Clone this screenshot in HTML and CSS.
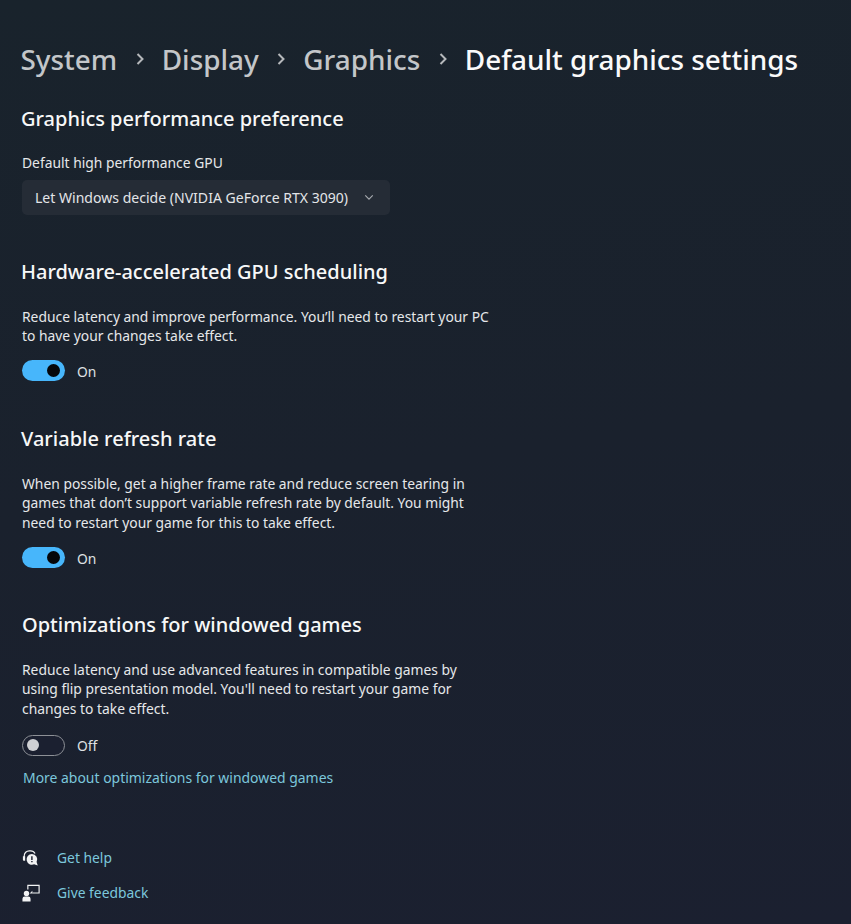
FILE: index.html
```html
<!DOCTYPE html>
<html lang="en">
<head>
<meta charset="utf-8">
<title>Default graphics settings</title>
<link rel="stylesheet" href="styles.css">
</head>
<body>
<main class="page">
  <nav class="crumbs">
    <span class="crumb">System</span>
    <svg class="sep" viewBox="0 0 10 14"><path d="M2.5 2l5 5-5 5"/></svg>
    <span class="crumb">Display</span>
    <svg class="sep" viewBox="0 0 10 14"><path d="M2.5 2l5 5-5 5"/></svg>
    <span class="crumb">Graphics</span>
    <svg class="sep" viewBox="0 0 10 14"><path d="M2.5 2l5 5-5 5"/></svg>
    <span class="crumb current">Default graphics settings</span>
  </nav>

  <section class="sec sec-gpu">
    <h2>Graphics performance preference</h2>
    <p class="label">Default high performance GPU</p>
    <div class="select">
      <span>Let Windows decide (NVIDIA GeForce RTX 3090)</span>
      <svg class="chev" viewBox="0 0 12 8"><path d="M1.5 1.5L6 6l4.5-4.5"/></svg>
    </div>
  </section>

  <section class="sec sec-hags">
    <h2>Hardware-accelerated GPU scheduling</h2>
    <p class="desc">Reduce latency and improve performance. You’ll need to restart your PC<br>to have your changes take effect.</p>
    <div class="toggle-row"><span class="toggle on"></span><span>On</span></div>
  </section>

  <section class="sec sec-vrr">
    <h2>Variable refresh rate</h2>
    <p class="desc">When possible, get a higher frame rate and reduce screen tearing in<br>games that don’t support variable refresh rate by default. You might<br>need to restart your game for this to take effect.</p>
    <div class="toggle-row"><span class="toggle on"></span><span>On</span></div>
  </section>

  <section class="sec sec-win">
    <h2>Optimizations for windowed games</h2>
    <p class="desc">Reduce latency and use advanced features in compatible games by<br>using flip presentation model. You'll need to restart your game for<br>changes to take effect.</p>
    <div class="toggle-row off-row"><span class="toggle"></span><span>Off</span></div>
    <a class="link more">More about optimizations for windowed games</a>
  </section>

  <footer class="help">
    <div class="help-row">
      <svg class="help-icon" viewBox="0 0 20 20">
        <path class="stroke" d="M2.5 10.5V7.500a5.500 5.500 0 0 1 5.500-5.500h1.500a5.500 5.500 0 0 1 5 3"/>
        <path class="fill" d="M1 8h2.500v5H2a1 1 0 0 1-1-1z"/>
        <path class="fill" fill-rule="evenodd" d="M11 5.5a6 6 0 0 1 5.2 9l1.3 3.7-4-1.2A6 6 0 1 1 11 5.500zM10.200 8v4.200h1.600V8zM10.200 13.200v1.600h1.600v-1.600z"/>
      </svg>
      <a class="link">Get help</a>
    </div>
    <div class="help-row">
      <svg class="help-icon" viewBox="0 0 20 20">
        <path class="stroke" d="M6.500 6V1.500h12.500v8.500h-7.500"/>
        <path class="fill" d="M8.500 10.500l3-3v3z"/>
        <circle class="fill" cx="5" cy="10.500" r="3"/>
        <path class="fill" d="M0.500 19.500v-3a2.500 2.500 0 0 1 2.500-2.500h4a2.500 2.500 0 0 1 2.500 2.500v3z"/>
      </svg>
      <a class="link">Give feedback</a>
    </div>
  </footer>
</main>
</body>
</html>
```

FILE: styles.css
```css
* { box-sizing: border-box; }
html, body { margin: 0; height: 100%; }
body {
  background: linear-gradient(172deg, #19232c 0%, #1a212d 50%, #1b2030 100%);
  color: #e6e8ea;
  font-family: "Noto Sans", "Open Sans", "Liberation Sans", sans-serif;
  font-size: 13.85px;
  overflow: hidden;
}
.page { padding: 39px 0 0 22px; height: 924px; }
.crumbs { display: flex; align-items: center; height: 40px; margin-left: -1.5px; font-size: 27.9px; font-weight: 500; line-height: 40px; }
.crumb { color: #c3c6c9; }
.crumb.current { color: #fafafa; }
.sep { width: 10px; height: 14px; margin: 0 17px 0 17.5px; fill: none; stroke: #b5b8bb; stroke-width: 2; }
h2 { margin: 0; font-size: 20px; font-weight: 500; line-height: 28px; color: #f7f8f8; }
.sec-gpu { padding-top: 26px; }
.label { margin: 20px 0 0; line-height: 20px; }
.select {
  display: flex; align-items: center; justify-content: space-between;
  width: 368px; height: 35px; margin-top: 7px; padding: 0 16px 0 13px;
  background: #252c36; border-radius: 5px; color: #e3e5e8; font-size: 14.05px;
}
.chev { width: 10px; height: 7px; fill: none; stroke: #a5a9ae; stroke-width: 1.4; }
.sec-hags { margin-top: 42.5px; }
.sec-vrr { margin-top: 42px; }
.sec-win { margin-top: 41.5px; }
.sec h2 { margin-left: -1px; }
.sec-win h2 { margin-left: 0; }
.desc { margin: 21px 0 0; line-height: 19.500px; }
.toggle-row { display: flex; align-items: center; gap: 12px; height: 24px; margin-top: 13px; color: #dfe1e3; }
.off-row { margin-top: 15.5px; }
.toggle {
  position: relative; display: block; width: 43px; height: 21px;
  border: 1.500px solid #8d9096; border-radius: 11px; background: #1b2030;
}
.toggle::after {
  content: ""; position: absolute; left: 3.500px; top: 3px; width: 12px; height: 12px;
  border-radius: 50%; background: #cfd0d3;
}
.toggle.on { background: #47b6fb; border: 0; }
.toggle.on::after { left: 25px; top: 4px; width: 13px; height: 13px; background: #05070a; }
.toggle.on + span { margin-top: 2px; }
.link { color: #7cc7dc; }
.more { display: block; margin: 10px 0 0 1px; line-height: 20px; font-size: 13.95px; }
.help { margin-top: 60px; display: flex; flex-direction: column; gap: 15px; }
.help-row { display: flex; align-items: center; gap: 17px; height: 20px; }
.help-icon { width: 18px; height: 18px; }
.help-icon .stroke { fill: none; stroke: #f2f3f4; stroke-width: 1.300; }
.help-icon .fill { fill: #f2f3f4; }
```
